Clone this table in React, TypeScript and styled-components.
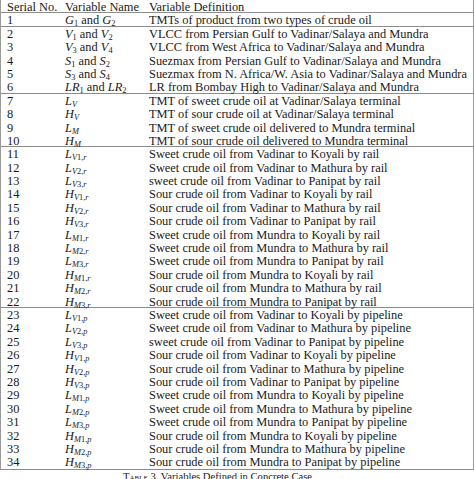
import React from 'react';
import styled, { createGlobalStyle } from 'styled-components';

const GlobalStyle = createGlobalStyle`
  html, body {
    margin: 0;
    padding: 0;
    background: #ffffff;
  }
  body {
    font-family: "Liberation Serif", "Times New Roman", serif;
    color: #1a1a1a;
    overflow: hidden;
  }
`;

const ROW_H = 13.4;

const Page = styled.div`
  width: 474px;
  height: 479px;
  overflow: hidden;
`;

const Table = styled.div`
  width: 474px;
  box-sizing: border-box;
  border-left: 1.5px solid #9a9a9a;
  border-right: 1.5px solid #9a9a9a;
  border-bottom: 1.5px solid #8c8c8c;
`;

const Row = styled.div<{ $rule?: boolean }>`
  display: grid;
  grid-template-columns: 58px 84px 1fr;
  box-sizing: border-box;
  height: ${ROW_H}px;
  padding-left: 6px;
  font-size: 12.4px;
  line-height: ${ROW_H + 1}px;
  white-space: nowrap;
  border-bottom: ${({ $rule }) => ($rule ? '1.5px solid #8c8c8c' : 'none')};
`;

const Cell = styled.div`
  overflow: visible;
`;

const MathName = styled.span`
  i {
    font-style: italic;
  }
  sub {
    font-size: 8.4px;
    line-height: 0;
    vertical-align: -2px;
  }
`;

const Caption = styled.div`
  padding-left: 123px;
  padding-top: 1px;
  font-size: 10.6px;
  line-height: 12px;
  white-space: nowrap;
`;

const SmallCaps = styled.span`
  font-variant: small-caps;
`;

type Sub = { base: string; sub: React.ReactNode };

const v = (base: string, sub: React.ReactNode): Sub => ({ base, sub });

const Var: React.FC<{ s: Sub }> = ({ s }) => (
  <>
    <i>{s.base}</i>
    <sub>{s.sub}</sub>
  </>
);

// subscript like V1,r -> italic letter, upright digit, italic mode
const routeSub = (site: string, n: number, mode: string) => (
  <>
    <i>{site}</i>
    {n},<i>{mode}</i>
  </>
);

type Item = { id: number; name: React.ReactNode; def: string; rule?: boolean };

const pair = (a: Sub, b: Sub) => (
  <MathName>
    <Var s={a} /> and <Var s={b} />
  </MathName>
);

const single = (s: Sub) => (
  <MathName>
    <Var s={s} />
  </MathName>
);

const route = (base: string, site: string, n: number, mode: string) => single(v(base, routeSub(site, n, mode)));

const items: Item[] = [
  { id: 1, name: pair(v('G', '1'), v('G', '2')), def: 'TMTs of product from two types of crude oil', rule: true },
  { id: 2, name: pair(v('V', '1'), v('V', '2')), def: 'VLCC from Persian Gulf to Vadinar/Salaya and Mundra' },
  { id: 3, name: pair(v('V', '3'), v('V', '4')), def: 'VLCC from West Africa to Vadinar/Salaya and Mundra' },
  { id: 4, name: pair(v('S', '1'), v('S', '2')), def: 'Suezmax from Persian Gulf to Vadinar/Salaya and Mundra' },
  { id: 5, name: pair(v('S', '3'), v('S', '4')), def: 'Suezmax from N. Africa/W. Asia to Vadinar/Salaya and Mundra' },
  { id: 6, name: pair(v('LR', '1'), v('LR', '2')), def: 'LR from Bombay High to Vadinar/Salaya and Mundra', rule: true },
  { id: 7, name: single(v('L', <i>V</i>)), def: 'TMT of sweet crude oil at Vadinar/Salaya terminal' },
  { id: 8, name: single(v('H', <i>V</i>)), def: 'TMT of sour crude oil at Vadinar/Salaya terminal' },
  { id: 9, name: single(v('L', <i>M</i>)), def: 'TMT of sweet crude oil delivered to Mundra terminal' },
  { id: 10, name: single(v('H', <i>M</i>)), def: 'TMT of sour crude oil delivered to Mundra terminal', rule: true },
];

const dests = ['Koyali', 'Mathura', 'Panipat'];
const origins: [string, string][] = [
  ['V', 'Vadinar'],
  ['M', 'Mundra'],
];
const modes: [string, string][] = [
  ['r', 'rail'],
  ['p', 'pipeline'],
];

let id = 11;
modes.forEach(([m, mode], mi) => {
  origins.forEach(([site, place]) => {
    (['L', 'H'] as const).forEach((base) => {
      dests.forEach((dest, di) => {
        let kind = base === 'L' ? 'Sweet' : 'Sour';
        // the original has lower-case "sweet" on the Vadinar-Panipat rows
        if (base === 'L' && site === 'V' && di === 2) kind = 'sweet';
        const last = site === 'M' && base === 'H' && di === 2;
        items.push({
          id,
          name: route(base, site, di + 1, m),
          def: `${kind} crude oil from ${place} to ${dest} by ${mode}`,
          rule: last && mi === 0,
        });
        id += 1;
      });
    });
  });
});

const App: React.FC = () => {
  return (
    <Page>
      <GlobalStyle />
      <Table>
        <Row $rule>
          <Cell>Serial No.</Cell>
          <Cell>Variable Name</Cell>
          <Cell>Variable Definition</Cell>
        </Row>
        {items.map((item) => (
          <Row key={item.id} $rule={item.rule}>
            <Cell>{item.id}</Cell>
            <Cell>{item.name}</Cell>
            <Cell>{item.def}</Cell>
          </Row>
        ))}
      </Table>
      <Caption>
        <SmallCaps>Table 3.</SmallCaps> Variables Defined in Concrete Case
      </Caption>
    </Page>
  );
};

export default App;
